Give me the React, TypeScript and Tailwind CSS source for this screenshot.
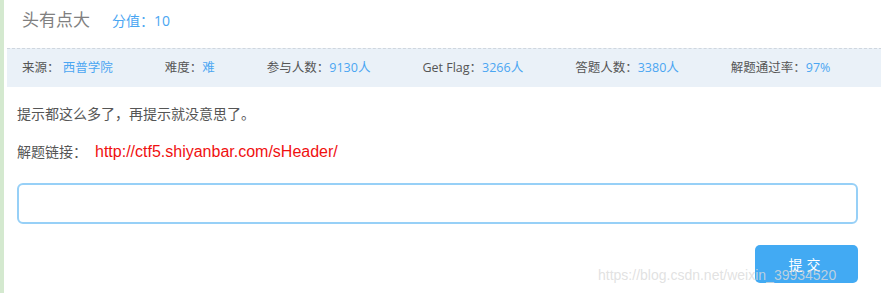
import React from "react";

const STATS = [
  { label: "来源：", value: "西普学院", gap: true },
  { label: "难度：", value: "难" },
  { label: "参与人数：", value: "9130人" },
  { label: "Get Flag：", value: "3266人" },
  { label: "答题人数：", value: "3380人" },
  { label: "解题通过率：", value: "97%" },
];

const font = "font-['Open_Sans','Noto_Sans_CJK_SC',sans-serif]";

export default function App() {
  return (
    <div className={`flex w-[881px] h-[293px] bg-white overflow-hidden ${font}`}>
      {/* 左侧绿色边 */}
      <div className="w-[4px] shrink-0 bg-[#d4e9cf]" />

      <div className="relative flex-1 pl-[3px]">
        {/* 标题 */}
        <div className="flex items-baseline h-[48px] pl-[15px] pt-[7px]">
          <span className="text-[17px] text-[#808080]">头有点大</span>
          <span className="ml-[22px] text-[14px] text-[#4aa6f2]">分值：10</span>
        </div>

        {/* 信息栏 */}
        <div className="flex items-center h-[39px] pl-[15px] bg-[#eaf1f8] border-t border-dashed border-[#cfd6de] text-[12.5px] text-[#555]">
          {STATS.map((s) => (
            <div key={s.label} className="mr-[52px] whitespace-nowrap">
              {s.label}
              {s.gap ? " " : ""}
              <span className="text-[#4aa6f2]">{s.value}</span>
            </div>
          ))}
        </div>

        {/* 内容 */}
        <div className="pl-[10px] pr-[20px]">
          <p className="mt-[16px] text-[14px] text-[#555] leading-[22px]">提示都这么多了，再提示就没意思了。</p>
          <p className="mt-[16px] text-[14px] text-[#555] leading-[22px]">
            解题链接：
            <span className="ml-[8px] text-[16px] text-[#f01010] font-['Liberation_Sans',sans-serif]">
              http://ctf5.shiyanbar.com/sHeader/
            </span>
          </p>

          <input
            type="text"
            className="mt-[20px] block w-[841px] h-[41px] rounded-[6px] border-2 border-[#97d0f7] outline-none"
          />

          <div className="flex justify-end w-[841px] mt-[21px]">
            <button className="w-[103px] h-[38px] rounded-[5px] bg-[#42aaf3] text-white text-[14px] tracking-[4px]">
              提交
            </button>
          </div>
        </div>

        {/* 水印 */}
        <div className="absolute left-[594px] top-[265px] text-[14px] text-[#dadada]/80 font-['Liberation_Sans',sans-serif] pointer-events-none">
          https://blog.csdn.net/weixin_39934520
        </div>
      </div>
    </div>
  );
}
